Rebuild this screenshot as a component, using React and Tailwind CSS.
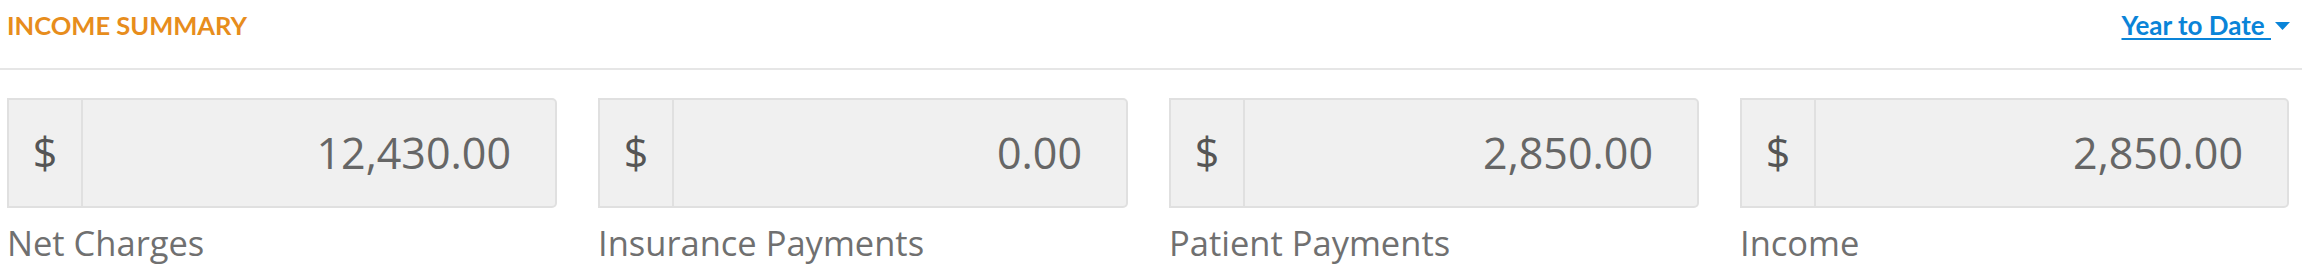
const items = [
  { label: 'Net Charges', value: '12,430.00' },
  { label: 'Insurance Payments', value: '0.00' },
  { label: 'Patient Payments', value: '2,850.00' },
  { label: 'Income', value: '2,850.00' },
];

const AmountBox = ({ label, value }) => (
  <div className="font-['Open_Sans',sans-serif]">
    <div className="flex h-[110px] border-2 border-[#e0e0e0] rounded-r-[5px] bg-[#f0f0f0]">
      <div className="w-[74px] shrink-0 flex items-center justify-center border-r-2 border-[#e0e0e0] text-[43px] leading-[1.2] text-[#555555]">
        $
      </div>
      <div className="flex-1 flex items-center justify-end pr-[44px] text-[43px] leading-[1.2] text-[#666666]">
        {value}
      </div>
    </div>
    <p className="mt-[14px] text-[34.5px] leading-[1.2] text-[#707070]">{label}</p>
  </div>
);

export default function App() {
  return (
    <div className="w-[2302px] h-[272px] bg-white font-['Lato',sans-serif]">
      <div className="flex items-start justify-between h-[70px] pt-[10px] pl-[7px] pr-[12px] border-b-2 border-[#e6e6e6]">
        <h2 className="text-[25.5px] leading-[1.2] font-bold text-[#e78d1c]">INCOME SUMMARY</h2>
        <button className="flex items-center text-[26px] leading-[1.2] font-bold text-[#0a84d8]">
          <span className="underline decoration-2 underline-offset-[3px]">Year to Date&nbsp;</span>
          <svg width="15" height="8" viewBox="0 0 15 8" className="ml-[4px]">
            <path d="M0 0 L15 0 L7.5 8 Z" fill="#0a84d8" />
          </svg>
        </button>
      </div>

      <div className="grid grid-cols-[550px_530px_530px_549px] gap-x-[41px] pl-[7px] pt-[28px]">
        {items.map((item) => (
          <AmountBox key={item.label} {...item} />
        ))}
      </div>
    </div>
  );
}
